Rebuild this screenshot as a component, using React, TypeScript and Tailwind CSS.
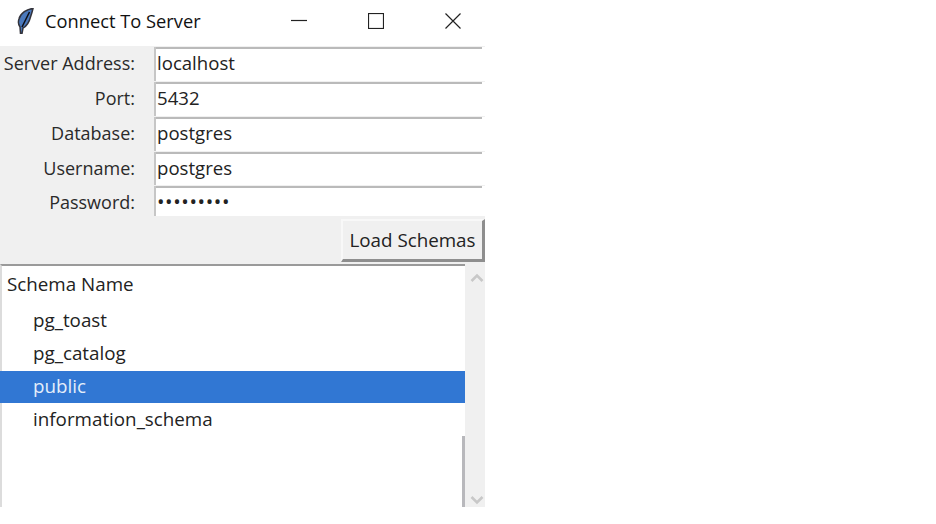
const font = { fontFamily: '"Open Sans", sans-serif' };

function Field({ label, value, height, dots }: { label: string; value: string; height: string; dots?: boolean }) {
  return (
    <div className={`flex items-stretch ${height}`}>
      <div className="w-[135px] pt-[3px] text-right text-[18px] leading-[26px] text-[#2a2a2a]">{label}</div>
      <div className="mb-[1px] ml-[19px] flex flex-1 flex-col border-l-[2px] border-l-[#c6c6c6] bg-white">
        <div className="mr-[3px] h-[2px] shrink-0 bg-[#bababa]" />
        <div className={`pt-[1px] pl-[1px] leading-[26px] text-[#222] ${dots ? "text-[20px] tracking-[0.6px]" : "text-[18.6px]"}`}>{value}</div>
      </div>
    </div>
  );
}

function Row({ text, selected }: { text: string; selected?: boolean }) {
  return (
    <div className={selected
      ? "mt-[1px] -ml-[2px] h-[32px] bg-[#3177d3] pl-[33px] text-[18.8px] leading-[31px] text-[#e4eefa]"
      : "h-[33px] pl-[31px] text-[18.8px] leading-[32px] text-[#222]"}>{text}</div>
  );
}

export default function App() {
  return (
    <div className="h-[524px] w-[936px] bg-white" style={font}>
      <div className="w-[485px]">
        <div className="flex h-[46px] items-center bg-white pb-[4px]">
          <svg className="ml-[17px]" width="17" height="26" viewBox="0 0 17 26">
            <path d="M16 0.5 C10 1 3.5 5 2 11 C1 14 1.5 17 3 19 L3.5 25.5 L5 25.5 L6 20 C10 18 12.5 13 13.5 9 C14.5 6 15.4 3 16 0.5 Z" fill="#4a79bd" stroke="#33333b" strokeWidth="1.5" />
            <path d="M12.5 4 L5 19" stroke="#0e0e14" strokeWidth="1.5" />
          </svg>
          <span className="ml-[11px] text-[18.3px] text-[#111]">Connect To Server</span>
          <div className="ml-auto flex items-center">
            <svg width="16" height="16" viewBox="0 0 16 16" className="mr-[61px]"><path d="M0 7.5H16" stroke="#222" strokeWidth="1.2" /></svg>
            <svg width="16" height="16" viewBox="0 0 16 16" className="mr-[61px]"><rect x="0.5" y="0.5" width="15" height="15" fill="none" stroke="#222" strokeWidth="1.2" /></svg>
            <svg width="16" height="16" viewBox="0 0 16 16" className="mr-[24px]"><path d="M0.5 0.5L15.5 15.5M15.5 0.5L0.5 15.5" stroke="#222" strokeWidth="1.2" /></svg>
          </div>
        </div>
        <div className="bg-[#f0f0f0]">
          <div className="pt-[1px]">
            <Field label="Server Address:" value="localhost" height="h-[35px]" />
            <Field label="Port:" value="5432" height="h-[35px]" />
            <Field label="Database:" value="postgres" height="h-[35px]" />
            <Field label="Username:" value="postgres" height="h-[34px]" />
            <Field label="Password:" value="•••••••••" height="h-[31px]" dots />
          </div>
          <div className="flex h-[47px] justify-end pt-[2px]">
            <button className="h-[43px] w-[144px] border-t-[2px] border-l-[2px] border-r-[3px] border-b-[3px] border-t-[#f8f8f8] border-l-[#f8f8f8] border-r-[#8e8e8e] border-b-[#8e8e8e] bg-[#f0f0f0] text-[18.8px] text-[#222]">
              Load Schemas
            </button>
          </div>
        </div>
        <div className="flex h-[243px]">
          <div className="relative flex-1 border-t-[2px] border-l-[2px] border-t-[#9a9a9a] border-l-[#dcdcdc] bg-white">
            <div className="h-[38px] pl-[5px] text-[18.8px] leading-[36px] text-[#222]">Schema Name</div>
            <Row text="pg_toast" />
            <Row text="pg_catalog" />
            <Row text="public" selected />
            <Row text="information_schema" />
            <div className="absolute top-[170px] right-0 bottom-0 w-[3px] bg-[#b8b8bc]" />
          </div>
          <div className="flex w-[20px] flex-col items-center justify-between bg-[#f0f0f0] pt-[9px] pb-[2px] pl-[4px]">
            <svg width="14" height="10" viewBox="0 0 14 10"><path d="M1.5 8L7 2.5L12.5 8" fill="none" stroke="#c8c8c8" strokeWidth="2.6" /></svg>
            <svg width="14" height="10" viewBox="0 0 14 10"><path d="M1.5 2L7 7.5L12.5 2" fill="none" stroke="#c8c8c8" strokeWidth="2.6" /></svg>
          </div>
        </div>
      </div>
    </div>
  );
}
